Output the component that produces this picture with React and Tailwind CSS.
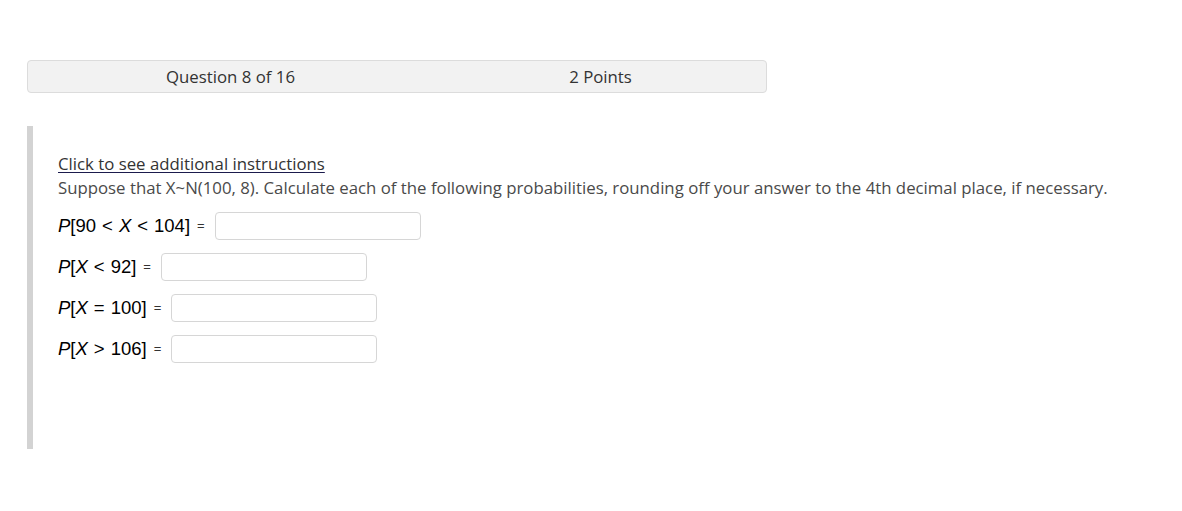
import React from 'react';

const Rel = ({ children }) => <span className="mx-[6px]">{children}</span>;
const I = ({ children }) => <span className="italic">{children}</span>;

const rows = [
  { id: 'a', expr: <><I>P</I>[90<Rel>&lt;</Rel><I>X</I><Rel>&lt;</Rel>104]</> },
  { id: 'b', expr: <><I>P</I>[<I>X</I><Rel>&lt;</Rel>92]</> },
  { id: 'c', expr: <><I>P</I>[<I>X</I><Rel>=</Rel>100]</> },
  { id: 'd', expr: <><I>P</I>[<I>X</I><Rel>&gt;</Rel>106]</> },
];

export default function App() {
  return (
    <div className="min-h-screen bg-white pt-[60px] pl-[27px]" style={{ fontFamily: '"Open Sans", sans-serif' }}>
      {/* header */}
      <div className="grid grid-cols-[405px_335px] w-[740px] h-[33px] items-center bg-[#f2f2f2] border border-[#dcdcdc] rounded-[4px] text-[16.8px] text-[#333]">
        <div className="text-center">Question 8 of 16</div>
        <div className="text-center">2 Points</div>
      </div>

      {/* question body */}
      <div className="mt-[33px] h-[323px] border-l-[6px] border-[#d3d3d3] pl-[25px] pt-[26px]">
        <div className="text-[16.8px] leading-[24px]">
          <a href="#" className="text-[#333] underline underline-offset-[2px] decoration-[#1b1b4d]">Click to see additional instructions</a>
          <p className="text-[#4a4a4a]">
            Suppose that X~N(100, 8). Calculate each of the following probabilities, rounding off your answer to the 4th decimal place, if necessary.
          </p>
        </div>

        <div className="mt-[12px] flex flex-col gap-[13px]">
          {rows.map((r) => (
            <div key={r.id} className="flex items-center h-[28px]">
              <span className="text-[18.5px] text-black" style={{ fontFamily: '"Liberation Sans", Arial, sans-serif' }}>{r.expr}</span>
              <span className="ml-[7px] mr-[10px] text-[13px] text-[#333]" style={{ fontFamily: '"Liberation Sans", Arial, sans-serif' }}>=</span>
              <input type="text" className="w-[206px] h-[28px] border border-[#d6d6d6] rounded-[4px] bg-white px-2 outline-none" />
            </div>
          ))}
        </div>
      </div>
    </div>
  );
}
